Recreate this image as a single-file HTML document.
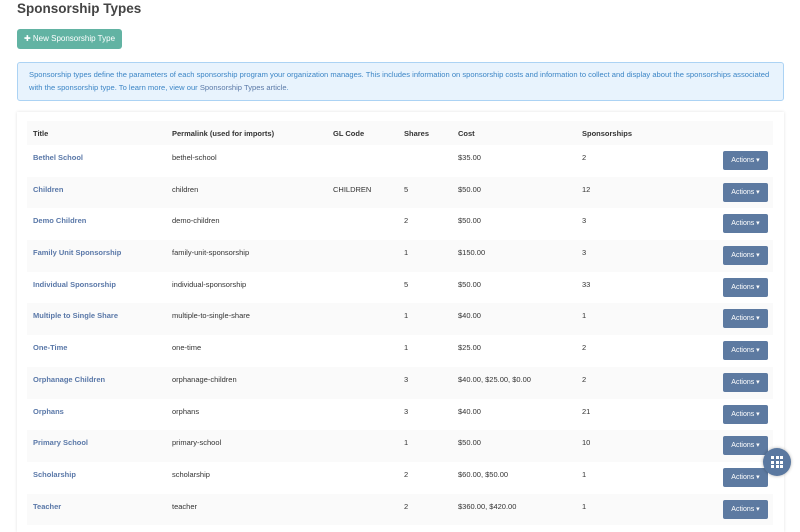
<!DOCTYPE html>
<html><head><style>
body{margin:0;background:#fff;font-family:"Liberation Sans",sans-serif;width:800px;height:515px;overflow:hidden;position:relative;color:#333}
h1{position:absolute;left:17px;top:1px;margin:0;font-size:13.5px;font-weight:bold;color:#444;line-height:16px}
.btn{position:absolute;left:17px;top:29px;width:105px;height:20px;background:#62b3a3;border-radius:3px;color:#fff;font-size:8px;line-height:20px;text-align:center}
.info{position:absolute;left:17px;top:62px;width:767px;height:39px;background:#e8f3fd;border:1px solid #acd3f4;border-radius:3px;color:#3d86c6;font-size:7.6px;line-height:12.5px;box-sizing:border-box;padding:6px 11px}
.info span{color:#5b7aa8}
.card{position:absolute;left:17px;top:112px;width:767px;height:420px;background:#fff;box-shadow:0 0 3px rgba(0,0,0,.12)}
table{position:absolute;left:10px;top:9px;width:746px;border-collapse:collapse;font-size:7.5px}
td,th{text-align:left;padding:0 0 0 6px;vertical-align:top}
th{height:24px;vertical-align:middle;font-weight:bold;color:#333}
tr:nth-child(odd){background:#fafafa}
td{height:31.7px;padding-top:8px;box-sizing:border-box}
td.t{color:#5a78a8;font-weight:bold}
.a{display:inline-block;float:right;margin:-2px 5px 0 0;width:45px;height:19px;background:#5d7aa1;border-radius:2px;color:#fff;font-size:7px;line-height:19px;text-align:center}
.fab{position:absolute;left:763px;top:448px;width:28px;height:28px;border-radius:50%;background:#5a78a0;box-shadow:0 0 3px rgba(0,0,0,.3)}
.fab i{position:absolute;width:3px;height:3px;background:#fff}
</style></head><body>
<h1>Sponsorship Types</h1>
<div class="btn">✚ New Sponsorship Type</div>
<div class="info">Sponsorship types define the parameters of each sponsorship program your organization manages. This includes information on sponsorship costs and information to collect and display about the sponsorships associated with the sponsorship type. To learn more, view our <span>Sponsorship Types article</span>.</div>
<div class="card"><table>
<colgroup><col style="width:139px"><col style="width:161px"><col style="width:71px"><col style="width:54px"><col style="width:124px"><col style="width:90px"><col></colgroup>
<tr><th>Title</th><th>Permalink (used for imports)</th><th>GL Code</th><th>Shares</th><th>Cost</th><th>Sponsorships</th><th></th></tr>
<tr><td class="t">Bethel School</td><td>bethel-school</td><td></td><td></td><td>$35.00</td><td>2</td><td><span class="a">Actions ▾</span></td></tr>
<tr><td class="t">Children</td><td>children</td><td>CHILDREN</td><td>5</td><td>$50.00</td><td>12</td><td><span class="a">Actions ▾</span></td></tr>
<tr><td class="t">Demo Children</td><td>demo-children</td><td></td><td>2</td><td>$50.00</td><td>3</td><td><span class="a">Actions ▾</span></td></tr>
<tr><td class="t">Family Unit Sponsorship</td><td>family-unit-sponsorship</td><td></td><td>1</td><td>$150.00</td><td>3</td><td><span class="a">Actions ▾</span></td></tr>
<tr><td class="t">Individual Sponsorship</td><td>individual-sponsorship</td><td></td><td>5</td><td>$50.00</td><td>33</td><td><span class="a">Actions ▾</span></td></tr>
<tr><td class="t">Multiple to Single Share</td><td>multiple-to-single-share</td><td></td><td>1</td><td>$40.00</td><td>1</td><td><span class="a">Actions ▾</span></td></tr>
<tr><td class="t">One-Time</td><td>one-time</td><td></td><td>1</td><td>$25.00</td><td>2</td><td><span class="a">Actions ▾</span></td></tr>
<tr><td class="t">Orphanage Children</td><td>orphanage-children</td><td></td><td>3</td><td>$40.00, $25.00, $0.00</td><td>2</td><td><span class="a">Actions ▾</span></td></tr>
<tr><td class="t">Orphans</td><td>orphans</td><td></td><td>3</td><td>$40.00</td><td>21</td><td><span class="a">Actions ▾</span></td></tr>
<tr><td class="t">Primary School</td><td>primary-school</td><td></td><td>1</td><td>$50.00</td><td>10</td><td><span class="a">Actions ▾</span></td></tr>
<tr><td class="t">Scholarship</td><td>scholarship</td><td></td><td>2</td><td>$60.00, $50.00</td><td>1</td><td><span class="a">Actions ▾</span></td></tr>
<tr><td class="t">Teacher</td><td>teacher</td><td></td><td>2</td><td>$360.00, $420.00</td><td>1</td><td><span class="a">Actions ▾</span></td></tr>
</table></div>
<div class="fab">
<i style="left:8px;top:8px"></i><i style="left:12.5px;top:8px"></i><i style="left:17px;top:8px"></i>
<i style="left:8px;top:12.5px"></i><i style="left:12.5px;top:12.5px"></i><i style="left:17px;top:12.5px"></i>
<i style="left:8px;top:17px"></i><i style="left:12.5px;top:17px"></i><i style="left:17px;top:17px"></i>
</div>
</body></html>
